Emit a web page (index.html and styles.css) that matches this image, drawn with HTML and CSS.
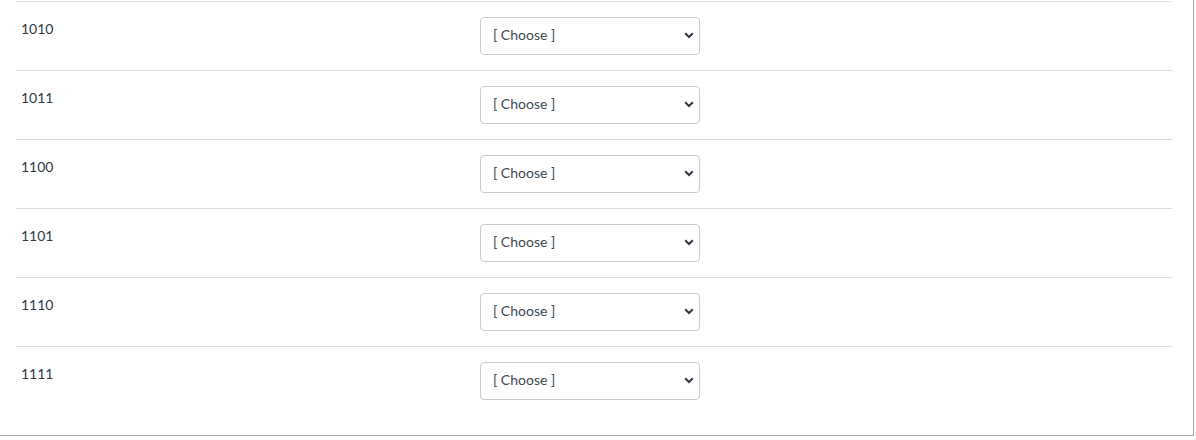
FILE: index.html
```html
<!DOCTYPE html>
<html lang="en">
<head>
<meta charset="utf-8">
<title>Matching</title>
<link rel="stylesheet" href="styles.css">
</head>
<body>
<div class="panel">
  <div class="row">
    <div class="label">1010</div>
    <div class="select-wrap">
      <select class="choice"><option>[ Choose ]</option></select>
      <svg class="chev" width="10" height="7" viewBox="0 0 10 7"><path d="M1.2 1.2 L5 5 L8.8 1.2" fill="none" stroke="#2d3b45" stroke-width="2"/></svg>
    </div>
  </div>
  <div class="row">
    <div class="label">1011</div>
    <div class="select-wrap">
      <select class="choice"><option>[ Choose ]</option></select>
      <svg class="chev" width="10" height="7" viewBox="0 0 10 7"><path d="M1.2 1.2 L5 5 L8.8 1.2" fill="none" stroke="#2d3b45" stroke-width="2"/></svg>
    </div>
  </div>
  <div class="row">
    <div class="label">1100</div>
    <div class="select-wrap">
      <select class="choice"><option>[ Choose ]</option></select>
      <svg class="chev" width="10" height="7" viewBox="0 0 10 7"><path d="M1.2 1.2 L5 5 L8.8 1.2" fill="none" stroke="#2d3b45" stroke-width="2"/></svg>
    </div>
  </div>
  <div class="row">
    <div class="label">1101</div>
    <div class="select-wrap">
      <select class="choice"><option>[ Choose ]</option></select>
      <svg class="chev" width="10" height="7" viewBox="0 0 10 7"><path d="M1.2 1.2 L5 5 L8.8 1.2" fill="none" stroke="#2d3b45" stroke-width="2"/></svg>
    </div>
  </div>
  <div class="row">
    <div class="label">1110</div>
    <div class="select-wrap">
      <select class="choice"><option>[ Choose ]</option></select>
      <svg class="chev" width="10" height="7" viewBox="0 0 10 7"><path d="M1.2 1.2 L5 5 L8.8 1.2" fill="none" stroke="#2d3b45" stroke-width="2"/></svg>
    </div>
  </div>
  <div class="row">
    <div class="label">1111</div>
    <div class="select-wrap">
      <select class="choice"><option>[ Choose ]</option></select>
      <svg class="chev" width="10" height="7" viewBox="0 0 10 7"><path d="M1.2 1.2 L5 5 L8.8 1.2" fill="none" stroke="#2d3b45" stroke-width="2"/></svg>
    </div>
  </div>
</div>
</body>
</html>
```
FILE: styles.css
```css
html, body {
  margin: 0;
  padding: 0;
  background: #ffffff;
}
body {
  font-family: Lato, "Open Sans", "Liberation Sans", sans-serif;
  font-size: 14px;
  color: #2d3b45;
}
.panel {
  box-sizing: border-box;
  width: 1194px;
  height: 436px;
  padding: 1px 21px 20px 16px;
  border-right: 1px solid #a6a6a6;
  border-bottom: 1px solid #a6a6a6;
}
.row {
  display: flex;
  align-items: flex-start;
  border-top: 1px solid #dcdfe1;
  padding: 15px 0;
}
.row:first-child {
  border-top-color: #e2e4e6;
}
.label {
  width: 464px;
  padding-left: 5px;
  padding-top: 2px;
  line-height: 20px;
  box-sizing: border-box;
  color: #2d3b45;
}
.select-wrap {
  position: relative;
  width: 220px;
  height: 38px;
}
.choice {
  appearance: none;
  -webkit-appearance: none;
  box-sizing: border-box;
  width: 220px;
  height: 38px;
  margin: 0;
  padding: 0 24px 3px 12px;
  border: 1px solid #c7cdd1;
  border-radius: 4px;
  background: #ffffff;
  font-family: Lato, "Open Sans", "Liberation Sans", sans-serif;
  font-size: 14px;
  color: #3d4a54;
  outline: none;
}
.chev {
  position: absolute;
  right: 6px;
  top: 15px;
  pointer-events: none;
}
```
